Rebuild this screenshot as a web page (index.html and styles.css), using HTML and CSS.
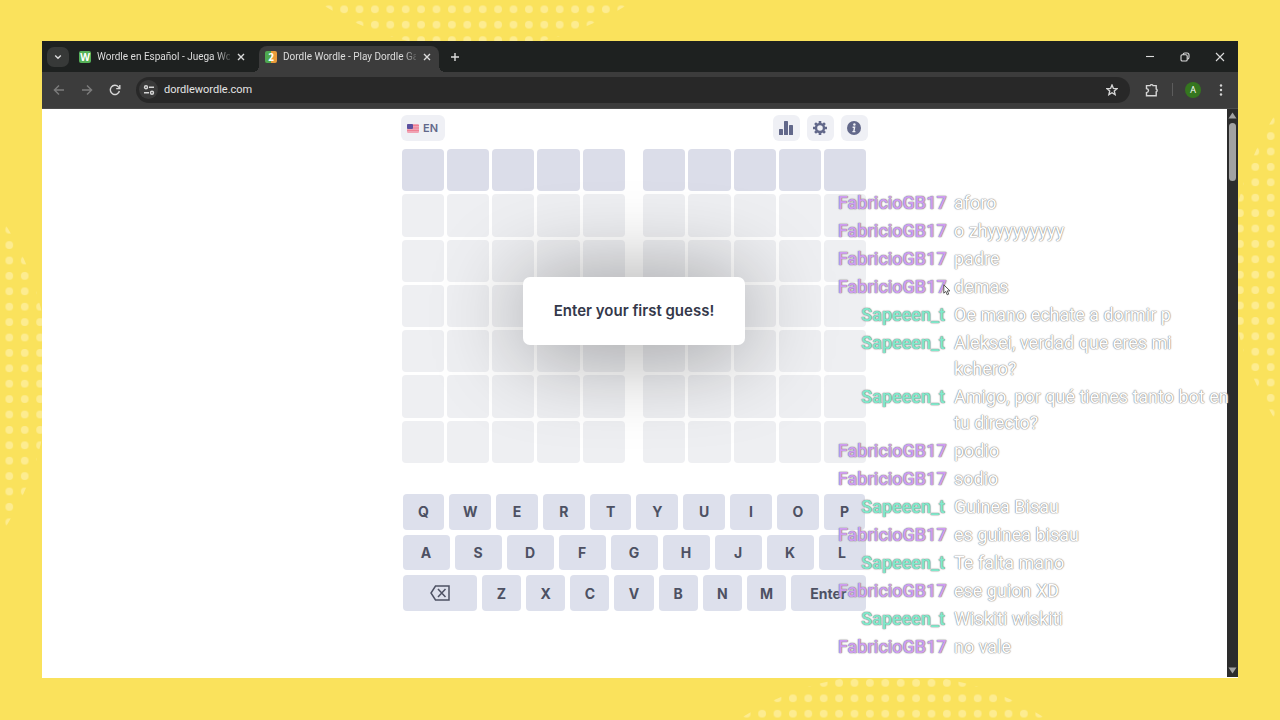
FILE: index.html
```html
<!DOCTYPE html>
<html lang="en">
<head>
<meta charset="utf-8">
<title>Dordle Wordle</title>
<link rel="stylesheet" href="styles.css">
</head>
<body>
<svg class="dots" aria-hidden="true">
  <defs>
    <pattern id="grain" x="-4" y="1.6" width="15.4" height="15.4" patternUnits="userSpaceOnUse"><circle cx="7.7" cy="7.7" r="3.9"/></pattern>
    <symbol id="arc" viewBox="0 0 300 48" width="300" height="48"><circle cx="150" cy="-236" r="285" fill="url(#grain)"/></symbol>
  </defs>
</svg>
<svg class="dots dots-top" width="300" height="48" aria-hidden="true"><use href="#arc"/></svg>
<svg class="dots dots-left" width="48" height="300" aria-hidden="true"><use href="#arc" transform="matrix(0 1 1 0 0 0)"/></svg>
<svg class="dots dots-right" width="48" height="300" aria-hidden="true"><use href="#arc" transform="matrix(0 1 -1 0 48 0)"/></svg>
<svg class="dots dots-bottom" width="300" height="48" aria-hidden="true"><use href="#arc" transform="matrix(1 0 0 -1 0 51)"/></svg>

<div class="window">
  <header class="tabstrip">
    <button class="tab-menu" aria-label="Search tabs"><svg width="8" height="8" viewBox="0 0 8 8"><path d="M1.2 2.5 4 5.3 6.8 2.5"/></svg></button>
    <div class="tab">
      <span class="favicon favicon-w">W</span>
      <span class="tab-title">Wordle en Español - Juega Wor</span>
      <button class="tab-close" aria-label="Close tab"><svg width="8" height="8" viewBox="0 0 8 8"><path d="M1 1l6 6M7 1 1 7"/></svg></button>
    </div>
    <div class="tab tab-active">
      <span class="favicon favicon-2">2</span>
      <span class="tab-title">Dordle Wordle - Play Dordle Ga</span>
      <button class="tab-close" aria-label="Close tab"><svg width="8" height="8" viewBox="0 0 8 8"><path d="M1 1l6 6M7 1 1 7"/></svg></button>
    </div>
    <button class="tab-new" aria-label="New tab"><svg width="10" height="10" viewBox="0 0 10 10"><path d="M5 1v8M1 5h8"/></svg></button>
    <div class="window-controls">
      <button aria-label="Minimize"><svg width="10" height="10" viewBox="0 0 10 10"><path d="M1 4.500h8"/></svg></button>
      <button aria-label="Restore"><svg width="10" height="10" viewBox="0 0 10 10"><rect x="1" y="2.8" width="6.2" height="6.2" rx="1.3"/><path d="M3 2.6Q3.2 1 4.8 1H7q2 0 2 2v2.2q0 1.6-1.6 1.9"/></svg></button>
      <button aria-label="Close"><svg width="10" height="10" viewBox="0 0 10 10"><path d="M1 1l8 8M9 1 1 9"/></svg></button>
    </div>
  </header>

  <nav class="toolbar">
    <button class="nav-button faded" aria-label="Back"><svg width="12" height="12" viewBox="0 0 12 12"><path d="M11 6H1.6M6 1.4 1.4 6 6 10.6"/></svg></button>
    <button class="nav-button faded" aria-label="Forward"><svg width="12" height="12" viewBox="0 0 12 12"><path d="M1 6h9.4M6 1.4 10.6 6 6 10.6"/></svg></button>
    <button class="nav-button" aria-label="Reload"><svg width="12" height="12" viewBox="0 0 12 12"><path d="M10.4 7A4.6 4.6 0 1 1 9.4 2.9L10.6 4.2M10.8 1v3.6H7.2"/></svg></button>
    <div class="omnibox">
      <button class="site-info" aria-label="Site information"><svg width="12" height="12" viewBox="0 0 12 12"><circle cx="3" cy="3.2" r="1.5"/><path d="M6 3.2h5M1 8.8h5"/><circle cx="9" cy="8.8" r="1.5"/></svg></button>
      <input class="address" type="text" value="dordlewordle.com" aria-label="Address">
      <button class="star" aria-label="Bookmark"><svg width="12" height="12" viewBox="0 0 12 12"><path d="M6 1.1l1.4 3.3 3.6.3-2.7 2.4.8 3.5L6 8.7l-3.1 1.9.8-3.5L1 4.7l3.6-.3z"/></svg></button>
    </div>
    <button class="extensions" aria-label="Extensions"><svg width="14" height="14" viewBox="0 0 14 14"><path d="M1.500 2.600H5.200a1.500 1.500 0 0 1 2.800 0H11.200V6a1.500 1.500 0 0 1 0 2.800v3.900H1.500V9.600q2-.3 2-2t-2-2z"/></svg></button>
    <span class="divider"></span>
    <button class="avatar" aria-label="Profile">A</button>
    <button class="more" aria-label="Menu"><svg width="4" height="14" viewBox="0 0 4 14"><circle cx="2" cy="2.500" r="1.200"/><circle cx="2" cy="7" r="1.200"/><circle cx="2" cy="11.500" r="1.200"/></svg></button>
  </nav>

  <div class="viewport">
    <main class="game">
      <div class="game-bar">
        <button class="chip language"><svg width="12" height="9" viewBox="0 0 12 9"><rect width="12" height="9" rx="1.200" fill="#f0a3b4"/><path d="M6 1.500h6M6 4h6M0 6.500h12" stroke="#ef7f93"/><rect width="6" height="5" rx="1" fill="#5a51a0"/></svg>EN</button>
        <div class="tools">
          <button class="chip" aria-label="Statistics"><svg width="14" height="14" viewBox="0 0 14 14"><rect x="0" y="8" width="4" height="6" rx=".6"/><rect x="5" y="0" width="4" height="14" rx=".6"/><rect x="10" y="4" width="4" height="10" rx=".6"/></svg></button>
          <button class="chip" aria-label="Settings"><svg width="14" height="14" viewBox="0 0 14 14"><circle cx="7" cy="7" r="4" fill="none" stroke="#62688a" stroke-width="2.400"/><path stroke="#62688a" stroke-width="2.600" d="M7 0v2.400M7 11.600V14M0 7h2.400M11.600 7H14M2.050 2.050l1.700 1.700M10.250 10.250l1.700 1.700M11.950 2.050l-1.700 1.700M3.750 10.250l-1.700 1.700"/></svg></button>
          <button class="chip" aria-label="Help"><svg width="14" height="14" viewBox="0 0 14 14"><circle cx="7" cy="7" r="7"/><circle cx="7.400" cy="3.500" r="1.200" fill="#eff0f5"/><path d="M5.600 6.200h2L6.800 10.600H8.400M5.400 10.600h1.400" fill="none" stroke="#eff0f5" stroke-width="1.400"/></svg></button>
        </div>
      </div>

      <div class="boards">
        <div class="board">
          <i class="now"></i><i class="now"></i><i class="now"></i><i class="now"></i><i class="now"></i>
          <i></i><i></i><i></i><i></i><i></i>
          <i></i><i></i><i></i><i></i><i></i>
          <i></i><i></i><i></i><i></i><i></i>
          <i></i><i></i><i></i><i></i><i></i>
          <i></i><i></i><i></i><i></i><i></i>
          <i></i><i></i><i></i><i></i><i></i>
        </div>
        <div class="board">
          <i class="now"></i><i class="now"></i><i class="now"></i><i class="now"></i><i class="now"></i>
          <i></i><i></i><i></i><i></i><i></i>
          <i></i><i></i><i></i><i></i><i></i>
          <i></i><i></i><i></i><i></i><i></i>
          <i></i><i></i><i></i><i></i><i></i>
          <i></i><i></i><i></i><i></i><i></i>
          <i></i><i></i><i></i><i></i><i></i>
        </div>
        <div class="toast" role="status">Enter your first guess!</div>
      </div>

      <div class="keyboard">
        <div class="key-row"><button>Q</button><button>W</button><button>E</button><button>R</button><button>T</button><button>Y</button><button>U</button><button>I</button><button>O</button><button>P</button></div>
        <div class="key-row"><button>A</button><button>S</button><button>D</button><button>F</button><button>G</button><button>H</button><button>J</button><button>K</button><button>L</button></div>
        <div class="key-row"><button class="wide" aria-label="Backspace"><svg width="20" height="16" viewBox="0 0 20 16"><path d="M5.500 1H19v14H5.500L1 8zM8 4l7.500 8M15.500 4 8 12"/></svg></button><button>Z</button><button>X</button><button>C</button><button>V</button><button>B</button><button>N</button><button>M</button><button class="wide">Enter</button></div>
      </div>
    </main>

    <div class="scrollbar" aria-hidden="true">
      <svg width="9" height="7" viewBox="0 0 9 7"><path d="M4.500.5 8.500 6.500H.5z"/></svg>
      <span class="thumb"></span>
      <svg width="9" height="7" viewBox="0 0 9 7"><path d="M.5.5h8L4.500 6.500z"/></svg>
    </div>

    <div class="chat">
      <b class="violet">FabricioGB17</b><span>aforo</span>
      <b class="violet">FabricioGB17</b><span>o zhyyyyyyyyy</span>
      <b class="violet">FabricioGB17</b><span>padre</span>
      <b class="violet">FabricioGB17</b><span>demas</span>
      <b class="mint">Sapeeen_t</b><span>Oe mano echate a dormir p</span>
      <b class="mint">Sapeeen_t</b><span>Aleksei, verdad que eres mi kchero?</span>
      <b class="mint">Sapeeen_t</b><span>Amigo, por qué tienes tanto bot en tu directo?</span>
      <b class="violet">FabricioGB17</b><span>podio</span>
      <b class="violet">FabricioGB17</b><span>sodio</span>
      <b class="mint">Sapeeen_t</b><span>Guinea Bisau</span>
      <b class="violet">FabricioGB17</b><span>es guinea bisau</span>
      <b class="mint">Sapeeen_t</b><span>Te falta mano</span>
      <b class="violet">FabricioGB17</b><span>ese guion XD</span>
      <b class="mint">Sapeeen_t</b><span>Wiskiti wiskiti</span>
      <b class="violet">FabricioGB17</b><span>no vale</span>
    </div>
    <svg class="pointer" width="8" height="12" viewBox="0 0 8 12" aria-hidden="true"><path d="M.8.8v8.400l2-1.800 1.400 3.400 1.500-.7-1.400-3.200H7z"/></svg>
  </div>
</div>
</body>
</html>
```
FILE: styles.css
```css
* { box-sizing: border-box; }

body {
  margin: 0;
  min-height: 100vh;
  padding: 41px 42px 42px;
  display: flex;
  position: relative;
  overflow: hidden;
  background: #fae25c;
  font-family: "Open Sans", "Noto Sans", sans-serif;
}

button {
  border: 0;
  padding: 0;
  background: none;
  color: inherit;
  font: inherit;
  display: flex;
  align-items: center;
  justify-content: center;
}

.dots { position: absolute; width: 0; height: 0; fill: #fdec90; }
.dots-top { top: 0; left: 325px; width: 300px; height: 48px; }
.dots-left { left: 0; top: 226px; width: 48px; height: 300px; }
.dots-right { right: 0; top: 117px; width: 48px; height: 300px; }
.dots-bottom { bottom: 0; left: 743px; width: 300px; height: 48px; }

.window {
  flex: 1;
  min-width: 0;
  position: relative;
  display: flex;
  flex-direction: column;
  background: #fff;
}

/* Browser chrome */
.tabstrip {
  height: 31px;
  display: flex;
  align-items: center;
  padding-left: 5px;
  background: #1e2120;
  color: #dcdcdc;
}
.tabstrip svg, .toolbar svg { fill: none; stroke: currentColor; stroke-width: 1.4; }

.tab-menu {
  width: 22px;
  height: 20px;
  margin-right: 4px;
  border-radius: 7px;
  background: #373938;
}
.tab {
  width: 180px;
  height: 26px;
  margin-top: 5px;
  padding: 0 7px 4px 6px;
  display: flex;
  align-items: center;
  gap: 6px;
  position: relative;
}
.tab + .tab { margin-left: 6px; }
.tab-active { background: #3c3c3c; border-radius: 8px 8px 0 0; }
.tab-active::before, .tab-active::after {
  content: "";
  position: absolute;
  bottom: 0;
  width: 6px;
  height: 6px;
}
.tab-active::before { left: -6px; background: radial-gradient(circle at 0 0, transparent 6px, #3c3c3c 6px); }
.tab-active::after { right: -6px; background: radial-gradient(circle at 100% 0, transparent 6px, #3c3c3c 6px); }
.favicon {
  width: 12px;
  height: 12px;
  flex: none;
  border-radius: 2px;
  color: #fff;
  font: 700 10px/12px "Open Sans", sans-serif;
  text-align: center;
}
.favicon-w { background: #56b158; }
.favicon-2 { background: linear-gradient(90deg, #4ea850 50%, #e99b3a 50%); }
.tab-title {
  flex: 1;
  min-width: 0;
  white-space: nowrap;
  font-family: Roboto, sans-serif;
  font-size: 10px;
  line-height: 16px;
  -webkit-mask-image: linear-gradient(90deg, #000 90%, rgba(0, 0, 0, .2));
  mask-image: linear-gradient(90deg, #000 90%, rgba(0, 0, 0, .2));
}
.tab-close { width: 10px; height: 16px; }
.tab-new { width: 20px; height: 20px; margin-left: 6px; }
.window-controls { margin: 0 1px 0 auto; display: flex; }
.window-controls button { width: 35px; height: 30px; }
.window-controls svg { stroke-width: 1.1; }

.toolbar {
  height: 37px;
  display: flex;
  align-items: center;
  padding: 0 10px 1px 6px;
  background: #3c3c3c;
  border-bottom: 1px solid #4b4b4b;
  color: #d6d6d6;
}
.nav-button { width: 22px; height: 22px; margin-right: 6px; }
.faded { color: #7c7c7c; }
.omnibox {
  flex: 1;
  height: 26px;
  margin-left: 4px;
  padding: 0 12px 0 3px;
  display: flex;
  align-items: center;
  gap: 6px;
  border-radius: 13px;
  background: #282828;
}
.site-info { width: 19px; height: 19px; border-radius: 50%; background: #3a3a3a; }
.address {
  flex: 1;
  min-width: 0;
  border: 0;
  padding: 1px 0 0;
  outline: 0;
  background: none;
  color: #e4e4e4;
  font: 11px/20px Roboto, sans-serif;
}
.extensions { width: 22px; height: 22px; margin-left: 11px; }
.divider { width: 1px; height: 13px; margin: 0 12px 0 9px; background: #5c5c5c; }
.avatar {
  width: 16px;
  height: 16px;
  border-radius: 50%;
  background: #35761f;
  color: #fff;
  font-size: 9px;
}
.more { width: 14px; height: 20px; margin-left: 13px; }
.more svg { fill: currentColor; stroke: none; }

/* Page */
.viewport { flex: 1; position: relative; display: flex; background: #fff; }
.game {
  flex: 1;
  display: flex;
  flex-direction: column;
  align-items: center;
  padding: 6px 1px 0 0;
  color: #4d5163;
  font-family: Inter, "Open Sans", sans-serif;
}
.game-bar { width: 467px; height: 26px; display: flex; justify-content: space-between; }
.tools { display: flex; gap: 7px; }
.chip {
  width: 27px;
  height: 26px;
  border-radius: 6px;
  background: #eff0f5;
  color: #62688a;
}
.chip svg { fill: #62688a; }
.language { width: 44px; gap: 4px; font-size: 11px; font-weight: 600; }

.boards { width: 465px; margin-top: 8px; display: flex; gap: 18px; position: relative; }
.board { flex: 1; display: grid; grid-template-columns: repeat(5, 1fr); gap: 3px; }
.board i { aspect-ratio: 1; border-radius: 4px; background: #eeeff2; }
.board .now { background: #dbdde9; }
.toast {
  position: absolute;
  top: 128px;
  left: 50%;
  width: 222px;
  transform: translateX(-50%);
  padding: 24px 0;
  border-radius: 7px;
  background: #fff;
  box-shadow: 0 4px 90px rgba(0, 0, 0, .42);
  color: #34384a;
  font-size: 15px;
  font-weight: 600;
  line-height: 20px;
  text-align: center;
  white-space: nowrap;
}

.keyboard {
  width: 463px;
  height: 117px;
  margin-top: 31px;
  display: grid;
  grid-template-rows: repeat(3, 1fr);
  gap: 5px;
}
.key-row { display: flex; gap: 5px; }
.key-row button {
  flex: 1 1 0;
  border-radius: 4px;
  background: #dde0ec;
  font-size: 14px;
  font-weight: 700;
}
.key-row .wide { flex-grow: 1.9; }
.key-row svg { fill: none; stroke: currentColor; stroke-width: 1.5; }

.scrollbar {
  width: 11px;
  margin-bottom: 1px;
  padding: 3px 0;
  display: flex;
  flex-direction: column;
  align-items: center;
  background: #2c2c2c;
}
.scrollbar svg { fill: #a2a2a2; }
.thumb { width: 7px; height: 58px; margin: 4px 0 auto; border-radius: 4px; background: #a2a2a2; }

/* Stream chat laid over the page */
.chat {
  position: absolute;
  top: 81px;
  right: 8px;
  width: 392px;
  display: grid;
  grid-template-columns: 107px 1fr;
  gap: 2px 9px;
  font: 400 18px/26px Roboto, sans-serif;
  color: #fff;
  text-shadow: 0 0 1px #8a8a8a, 0 0 1px #8a8a8a, 0 0 2px #b4b4b4;
}
.chat b { text-align: right; font-weight: 500; }
.violet { color: #cf9df0; }
.mint { color: #7fe9cb; }

.pointer {
  position: absolute;
  top: 175px;
  left: 901px;
  fill: #fff;
  stroke: #555;
  stroke-width: 1;
}
```
